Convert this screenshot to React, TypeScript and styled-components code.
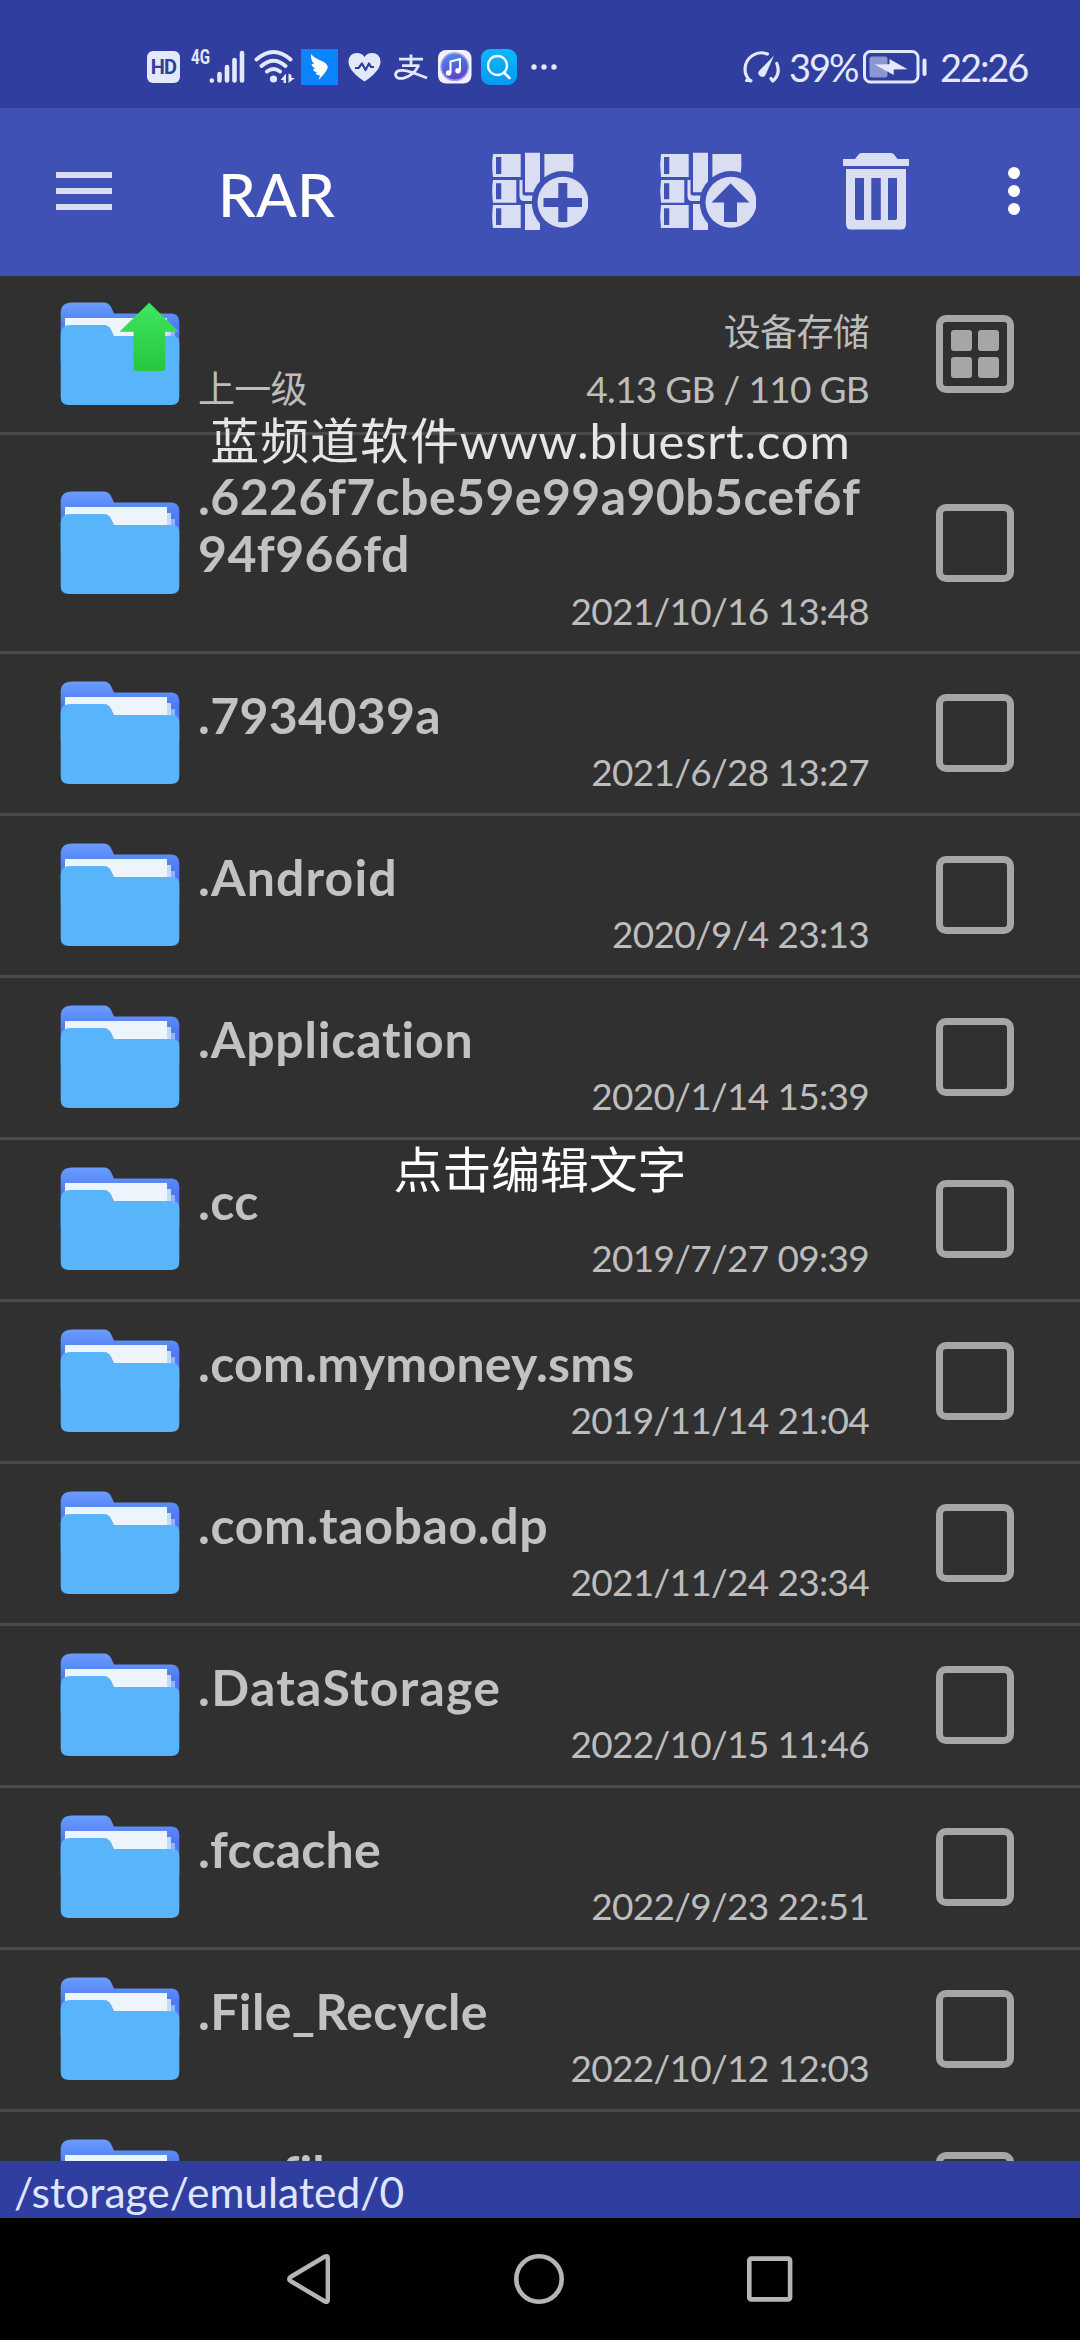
import React from "react";
import styled, { createGlobalStyle } from "styled-components";

const colors = {
  status: "#303e9f",
  toolbar: "#3f51b5",
  list: "#303030",
  divider: "#4a4a4a",
  name: "#c2c2c4",
  meta: "#bdbdbd",
  box: "#a6a6a6",
  icon: "#dadef3",
  statusIcon: "#e4e8fb",
};

const GlobalStyle = createGlobalStyle`
  * { box-sizing: border-box; }
  body { margin: 0; background: #000; }
  svg { display: block; flex: none; }
`;

const Screen = styled.div`
  position: relative;
  display: flex;
  flex-direction: column;
  width: 1080px;
  height: 2340px;
  overflow: hidden;
  background: ${colors.list};
  font-family: Lato, "Noto Sans CJK SC", sans-serif;
`;

/* ---------- status bar ---------- */

const StatusBar = styled.header`
  flex: none;
  display: flex;
  align-items: center;
  height: 108px;
  padding: 26px 52px 0 147px;
  background: ${colors.status};
  color: ${colors.statusIcon};
`;

const StatusGroup = styled.div<{ $push?: boolean }>`
  display: flex;
  align-items: center;
  height: 36px;
  margin-left: ${(p) => (p.$push ? "auto" : "0")};
`;

const StatusItem = styled.div<{ $gap?: number }>`
  flex: none;
  margin-left: ${(p) => p.$gap ?? 0}px;
`;

const HdBadge = styled.div`
  display: grid;
  place-items: center;
  width: 33px;
  height: 32px;
  border-radius: 6px;
  background: ${colors.statusIcon};
  color: ${colors.status};
  font: 700 20px/32px Roboto, sans-serif;
  letter-spacing: -0.8px;
`;

const NetworkLabel = styled.div`
  width: 18px;
  height: 36px;
  margin-left: 11px;
  font: 700 21px/17px Roboto, sans-serif;
  transform: scaleX(0.72);
  transform-origin: left;
  white-space: nowrap;
`;

const StatusText = styled.div<{ $width: number; $gap: number }>`
  width: ${(p) => p.$width}px;
  margin-left: ${(p) => p.$gap}px;
  font-size: 38px;
  line-height: 44px;
  white-space: nowrap;
  letter-spacing: -2.1px;
`;

/* ---------- toolbar ---------- */

const Toolbar = styled.nav`
  flex: none;
  display: flex;
  align-items: center;
  height: 168px;
  padding: 0 60px 2px 56px;
  background: ${colors.toolbar};
`;

const Title = styled.h1`
  flex: 1;
  margin: 6px 0 0 106px;
  color: #fff;
  font-size: 60px;
  font-weight: 500;
  line-height: 72px;
  letter-spacing: 0.2px;
`;

const IconButton = styled.button<{ $gap?: number }>`
  flex: none;
  margin: 0 0 0 ${(p) => p.$gap ?? 0}px;
  padding: 0;
  border: 0;
  background: none;
`;

/* ---------- list ---------- */

const List = styled.main`
  flex: 1;
  min-height: 0;
  overflow: hidden;
`;

const Row = styled.section<{ $height: number }>`
  display: flex;
  align-items: center;
  height: ${(p) => p.$height}px;
  padding: 0 66px ${(p) => (p.$height === 162 ? 1 : 0)}px 60px;
  border-bottom: 3px solid ${colors.divider};
`;

const Details = styled.div`
  flex: 1;
  align-self: stretch;
  display: flex;
  flex-direction: column;
  justify-content: space-between;
  margin: 0 67px 0 18px;
  padding: 33px 0 18px;
`;

const HeaderDetails = styled(Details)`
  justify-content: flex-start;
  padding: 27px 0 0;
`;

const Name = styled.div<{ $tracking: number }>`
  color: ${colors.name};
  font-size: 50px;
  font-weight: 700;
  line-height: 57px;
  letter-spacing: ${(p) => p.$tracking}px;
  font-variant-ligatures: none;
  word-break: break-all;
`;

const Meta = styled.div<{ $tall?: boolean }>`
  color: ${colors.meta};
  font-size: 37px;
  line-height: ${(p) => (p.$tall ? 57 : 44)}px;
  letter-spacing: -0.7px;
  text-align: right;
  white-space: nowrap;
`;

const MetaLine = styled.div`
  display: flex;
  justify-content: space-between;
`;

const Checkbox = styled.div`
  flex: none;
  display: grid;
  grid-template-columns: 21px 21px;
  place-content: center;
  gap: 6px;
  width: 78px;
  height: 78px;
  border: 7.5px solid ${colors.box};
  border-radius: 10px;
`;

const Tile = styled.span`
  height: 21px;
  border-radius: 3px;
  background: ${colors.box};
`;

const PathBar = styled.div`
  flex: none;
  height: 57px;
  padding: 2px 14px 0;
  background: #303e9f;
  color: #dfe5ff;
  font-size: 42.5px;
  line-height: 57px;
`;

const NavBar = styled.footer`
  flex: none;
  display: flex;
  align-items: center;
  justify-content: space-between;
  height: 122px;
  padding: 0 286px;
  background: #000;
`;

const Caption = styled.div`
  position: absolute;
  top: 1139px;
  left: 0;
  width: 1080px;
  color: #fff;
  font-size: 48.8px;
  line-height: 60px;
  text-align: center;
  white-space: nowrap;
`;

const Watermark = styled(Caption)`
  top: 410px;
  width: 1061px;
  color: #e6e6e6;
  font-size: 49px;
  letter-spacing: 0.9px;
`;

/* ---------- drawings ---------- */

const Folder = ({ up = false }: { up?: boolean }) => (
  <svg width="120" height="104" viewBox="0 0 120 104">
    <defs>
      <linearGradient id="folderBack" x1="0" y1="0" x2="0" y2="1">
        <stop offset="0" stopColor="#6a9dff" />
        <stop offset="0.4" stopColor="#4f7bf2" />
      </linearGradient>
      <linearGradient id="upArrow" x1="0" y1="0" x2="0" y2="1">
        <stop offset="0" stopColor="#3fe661" />
        <stop offset="1" stopColor="#25c63c" />
      </linearGradient>
    </defs>
    <path fill="url(#folderBack)" d="M.7 11Q.7.5 12 .5H44Q48.500.5 51 5L54 11.500H111Q119.300 11.500 119.300 20V60H.7Z" />
    <path fill="#8fb4fb" d="M100 28H115V45H100Z" />
    <path fill="#c5d9fb" d="M100 22H111V45H100Z" />
    <path fill="#edf4fb" d="M5 16H107V45H5Z" />
    <path fill="#58b4fb" d="M.7 32Q.7 23 11 23H44Q48.500 23 51 27.500L54 34H112Q119.300 34 119.300 41V95Q119.300 103 111 103H9Q.7 103 .7 95Z" />
    {up && <path fill="url(#upArrow)" d="M89.200.8 119 29.800H105.300V66Q105.300 69 102 69H77Q73.600 69 73.600 66V29.800H59.500Z" />}
  </svg>
);

const MenuIcon = () => (
  <svg width="56" height="38" viewBox="0 0 56 38" fill={colors.icon}>
    <path d="M0 0H56V6H0ZM0 16H56V22H0ZM0 32H56V38H0Z" />
  </svg>
);

const ArchiveIcon = ({ kind }: { kind: "add" | "extract" }) => (
  <svg width="97" height="78" viewBox="0 0 97 78" fill={colors.icon}>
    <path
      fillRule="evenodd"
      d="M2 2H29.700V25H2Q.4 13 2 2ZM5 5V22H10.300V5ZM2 28H25.300V50.700H2Q.4 39 2 28ZM5 31.300V47.300H10.300V31.300ZM2 53H29.700V76H2Q.4 65 2 53ZM5 56.300V73H10.300V56.300Z"
    />
    <path d="M34 .7H49V40.300H34ZM34 52H49V78H34ZM53.400 2H82.200Q83 13 81.500 25H53.400Z" />
    <path d="M28.500 28H31.500V41Q31.500 43.500 34 43.500H44V49H33Q28.500 49 28.500 44Z" />
    <circle cx="72" cy="50.300" r="31.300" fill={colors.toolbar} />
    <circle cx="72" cy="50.300" r="25.500" />
    {kind === "add" ? (
      <path fill={colors.toolbar} d="M67.300 31H76.300V46H91V55H76.300V70H67.300V55H52.500V46H67.300Z" />
    ) : (
      <path fill={colors.toolbar} d="M71.500 31.300 90.500 50.500H78V70H65V50.500H52.500Z" />
    )}
  </svg>
);

const TrashIcon = () => (
  <svg width="68" height="78" viewBox="0 0 68 78" fill={colors.icon}>
    <path d="M1 7H13L16.500 2.500Q17.500 1 19.500 1H49Q51 1 52 2.500L55.500 7H67V14H1Z" />
    <path
      fillRule="evenodd"
      d="M4 17H64V72Q64 77.500 59 77.500H9Q4 77.500 4 72ZM13 26V66Q13 68 15 68H22V26ZM29.300 26V68H38.800V26ZM46 26V68H53Q55 68 55 66V26Z"
    />
  </svg>
);

const MoreIcon = () => (
  <svg width="12" height="48" viewBox="0 0 12 48" fill="#fff">
    <circle cx="6" cy="6" r="6" />
    <circle cx="6" cy="24" r="6" />
    <circle cx="6" cy="42" r="6" />
  </svg>
);

const SignalIcon = () => (
  <svg width="36" height="36" viewBox="0 0 36 36" stroke={colors.statusIcon} strokeWidth="4.600" strokeLinecap="round">
    <path d="M2.800 31.500V31.600M10.500 25V31.500M18 18V31.500M25.500 11V31.500M33 4V31.500" />
  </svg>
);

const WifiIcon = () => (
  <svg width="42" height="36" viewBox="0 0 42 36" fill="none" stroke={colors.statusIcon} strokeWidth="3.900" strokeLinecap="round">
    <path d="M2.500 10.500Q19.500-4.500 36.500 10.500M7.500 17Q19.500 6.500 31.500 17M13 22.500Q19.500 17.500 26 22.500" />
    <circle cx="19.500" cy="30" r="3.600" fill={colors.statusIcon} stroke="none" />
    <path fill={colors.statusIcon} stroke="none" d="M32 24.500V34H29.500V31H26.500ZM34.500 24.500V34L41 29H37.500V26Z" />
  </svg>
);

const DingIcon = () => (
  <svg width="37" height="36" viewBox="0 0 37 36">
    <rect width="37" height="36" fill="#0d84ff" />
    <path fill="#fff" d="M10 5Q13 9 22 12.500Q26.500 15 26.800 18.500Q25.500 23 17.500 31L19 26.500Q15.500 26.500 14.500 24L16.500 23.500Q12.500 22.500 12 20L14.500 19.500Q11 18 10.500 15L13 15Q9.500 11 10 5Z" />
  </svg>
);

const HeartIcon = () => (
  <svg width="33" height="30" viewBox="0 0 33 30">
    <path fill={colors.statusIcon} d="M16.500 29.500Q.5 19 .5 9.500Q1 1 9 1Q14 1 16.500 5Q19 1 24 1Q32 1 32.500 9.500Q32.500 19 16.500 29.500Z" />
    <path fill="none" stroke={colors.status} strokeWidth="2.200" strokeLinejoin="round" d="M7 16H10.500L14 11.500L17.500 18L21 11.500L23 15H26" />
  </svg>
);

const PayIcon = () => (
  <svg width="34" height="27" viewBox="0 0 34 27" fill="none" stroke={colors.statusIcon} strokeWidth="2.800">
    <path d="M5 5.200H29M17 .5V12M8 11.600H25.500" />
    <path d="M24.500 11.500Q20 21.500 9 24.300Q1.500 25 1.500 20.500Q2 16 8.500 16.300Q15 16.500 33 24" />
  </svg>
);

const MusicIcon = () => (
  <svg width="34" height="34" viewBox="0 0 34 34">
    <defs>
      <linearGradient id="disc" x1="0" y1="0" x2="0.300" y2="1">
        <stop offset="0" stopColor="#4b8df0" />
        <stop offset="1" stopColor="#5a49c4" />
      </linearGradient>
    </defs>
    <rect width="33.500" height="33.500" rx="8" fill="#f4f3fd" />
    <circle cx="16.700" cy="16.700" r="13.600" fill="url(#disc)" stroke="#a39af0" strokeWidth="1.600" />
    <path fill="none" stroke="#fff" strokeWidth="2" d="M12.500 23V11.500L22 9V20.500" />
    <circle cx="10.500" cy="23" r="2.700" fill="#fff" />
    <circle cx="20" cy="20.800" r="2.700" fill="#fff" />
  </svg>
);

const SearchIcon = () => (
  <svg width="36" height="36" viewBox="0 0 36 36">
    <defs>
      <linearGradient id="searchTile" x1="0" y1="0" x2="0" y2="1">
        <stop offset="0" stopColor="#0bb8fb" />
        <stop offset="1" stopColor="#0798f2" />
      </linearGradient>
    </defs>
    <rect width="36" height="36" rx="9" fill="url(#searchTile)" />
    <circle cx="16.500" cy="16.500" r="9.500" fill="none" stroke="#fff" strokeWidth="2.300" />
    <path d="M23 23.500 28.500 29" stroke="#fff" strokeWidth="2.600" strokeLinecap="round" />
  </svg>
);

const EllipsisIcon = () => (
  <svg width="26" height="6" viewBox="0 0 26 6" fill={colors.statusIcon}>
    <circle cx="3" cy="3" r="2.700" />
    <circle cx="13" cy="3" r="2.700" />
    <circle cx="23" cy="3" r="2.700" />
  </svg>
);

const GaugeIcon = () => (
  <svg width="37" height="34" viewBox="0 0 37 34" fill="none" stroke={colors.statusIcon} strokeWidth="3.200" strokeLinecap="round">
    <path d="M7.500 31Q2 26.500 2 18.500A16.500 16.500 0 0 1 24.500 4M3.500 30.500H8M33.800 13.500Q38 24 29.800 31M28 28.500 29.800 31" />
    <path fill={colors.statusIcon} stroke="none" d="M31 5.500 22.500 25A3.700 3.700 0 1 1 16 21Z" />
  </svg>
);

const BatteryIcon = () => (
  <svg width="65" height="34" viewBox="0 0 65 34">
    <rect x="1.500" y="1.500" width="53.500" height="30.500" rx="6" fill="none" stroke={colors.statusIcon} strokeWidth="3" />
    <rect x="6.500" y="6.500" width="18" height="21" rx="2.500" fill="#8e96d0" />
    <path fill={colors.statusIcon} d="M11.500 14.500 26.500 14.200V9L44.500 19.300 30.700 19.600V25Z" />
    <rect x="59.500" y="8.500" width="4" height="17.500" rx="2" fill={colors.statusIcon} />
  </svg>
);

const BackIcon = () => (
  <svg width="46" height="52" viewBox="0 0 46 52" fill="none" stroke="#b5b5b5" strokeWidth="4.400" strokeLinejoin="round">
    <path d="M3.500 26Q3 25 4.500 24L39 3.500Q41.800 2.200 41.800 5V47Q41.800 49.800 39 48.500L4.500 28Q3 27 3.500 26Z" />
  </svg>
);

const HomeIcon = () => (
  <svg width="50" height="50" viewBox="0 0 50 50" fill="none" stroke="#b5b5b5" strokeWidth="4.600">
    <circle cx="25" cy="25" r="22.700" />
  </svg>
);

const RecentIcon = () => (
  <svg width="48" height="48" viewBox="0 0 48 48" fill="none" stroke="#b5b5b5" strokeWidth="4.600">
    <rect x="3.300" y="3.600" width="40.800" height="40.800" rx="2" />
  </svg>
);

/* ---------- data ---------- */

type Entry = { name: string; date?: string; tracking: number; height?: number };

const folders: Entry[] = [
  { name: ".6226f7cbe59e99a90b5cef6f94f966fd", date: "2021/10/16 13:48", tracking: 0.4, height: 219 },
  { name: ".7934039a", date: "2021/6/28 13:27", tracking: 0.3 },
  { name: ".Android", date: "2020/9/4 23:13", tracking: 1.1 },
  { name: ".Application", date: "2020/1/14 15:39", tracking: 0.8 },
  { name: ".cc", date: "2019/7/27 09:39", tracking: 0.3 },
  { name: ".com.mymoney.sms", date: "2019/11/14 21:04", tracking: 0.25 },
  { name: ".com.taobao.dp", date: "2021/11/24 23:34", tracking: 0.6 },
  { name: ".DataStorage", date: "2022/10/15 11:46", tracking: 1.3 },
  { name: ".fccache", date: "2022/9/23 22:51", tracking: 0.2 },
  { name: ".File_Recycle", date: "2022/10/12 12:03", tracking: 0.35 },
  { name: ".gs_file", tracking: 0 },
];

export default function App() {
  return (
    <>
      <GlobalStyle />
      <Screen>
        <StatusBar>
          <StatusGroup>
            <HdBadge>HD</HdBadge>
            <NetworkLabel>4G</NetworkLabel>
            <StatusItem><SignalIcon /></StatusItem>
            <StatusItem $gap={9}><WifiIcon /></StatusItem>
            <StatusItem $gap={5}><DingIcon /></StatusItem>
            <StatusItem $gap={10}><HeartIcon /></StatusItem>
            <StatusItem $gap={13}><PayIcon /></StatusItem>
            <StatusItem $gap={10}><MusicIcon /></StatusItem>
            <StatusItem $gap={9}><SearchIcon /></StatusItem>
            <StatusItem $gap={14}><EllipsisIcon /></StatusItem>
          </StatusGroup>
          <StatusGroup $push>
            <GaugeIcon />
            <StatusText $width={68} $gap={9}>39%</StatusText>
            <StatusItem $gap={6}><BatteryIcon /></StatusItem>
            <StatusText $width={88} $gap={12}>22:26</StatusText>
          </StatusGroup>
        </StatusBar>

        <Toolbar>
          <IconButton aria-label="菜单"><MenuIcon /></IconButton>
          <Title>RAR</Title>
          <IconButton><ArchiveIcon kind="add" /></IconButton>
          <IconButton $gap={71}><ArchiveIcon kind="extract" /></IconButton>
          <IconButton $gap={86}><TrashIcon /></IconButton>
          <IconButton $gap={98}><MoreIcon /></IconButton>
        </Toolbar>

        <List>
          <Row $height={159}>
            <Folder up />
            <HeaderDetails>
              <Meta $tall>设备存储</Meta>
              <MetaLine>
                <Meta $tall>上一级</Meta>
                <Meta $tall>4.13 GB / 110 GB</Meta>
              </MetaLine>
            </HeaderDetails>
            <Checkbox><Tile /><Tile /><Tile /><Tile /></Checkbox>
          </Row>
          {folders.map((f) => (
            <Row key={f.name} $height={f.height ?? 162}>
              <Folder />
              <Details>
                <Name $tracking={f.tracking}>{f.name}</Name>
                {f.date && <Meta>{f.date}</Meta>}
              </Details>
              <Checkbox />
            </Row>
          ))}
        </List>

        <PathBar>/storage/emulated/0</PathBar>
        <NavBar>
          <BackIcon />
          <HomeIcon />
          <RecentIcon />
        </NavBar>

        <Watermark>蓝频道软件www.bluesrt.com</Watermark>
        <Caption>点击编辑文字</Caption>
      </Screen>
    </>
  );
}
